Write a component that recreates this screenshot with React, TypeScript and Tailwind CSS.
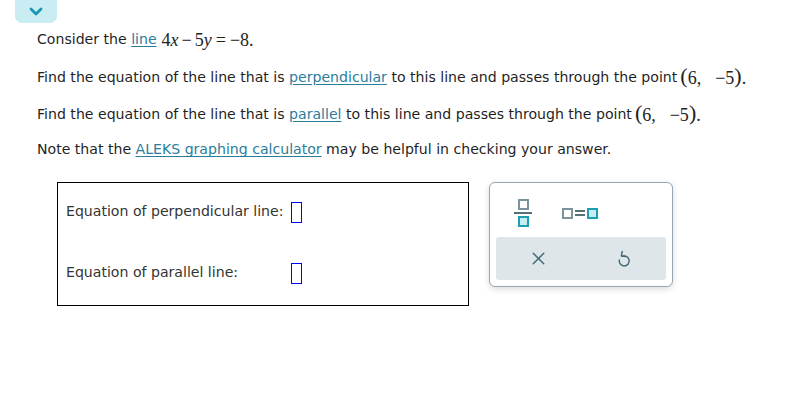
import { X } from 'lucide-react'

const link = 'text-[#2b7d9c] underline underline-offset-2'
const math = 'font-["Liberation_Serif",serif] text-[18px] text-[#222]'

function AnswerBox() {
  return <span className="inline-block w-[11px] h-[21px] border border-[#0000ff] align-middle" />
}

function Point() {
  return (
    <span className={`${math} flex items-center ml-[3px]`}>
      <span className="text-[22px] leading-none relative -top-[2px]">(</span>
      <span>6,</span>
      <span className="ml-[14px]">−5</span>
      <span className="text-[22px] leading-none relative -top-[2px]">)</span>
      <span>.</span>
    </span>
  )
}

function FractionIcon() {
  return (
    <div className="flex flex-col items-center w-[18px]">
      <div className="w-[11px] h-[11px] border-2 border-[#7b939c] bg-white" />
      <div className="w-[18px] h-[2px] bg-[#56707a] my-[2px]" />
      <div className="w-[11px] h-[11px] border-2 border-[#1a9fb3] bg-[#c8eef4]" />
    </div>
  )
}

function EqualsIcon() {
  return (
    <div className="flex items-center gap-[2px]">
      <div className="w-[11px] h-[11px] border-2 border-[#7b939c] bg-white" />
      <div className="flex flex-col gap-[2px] w-[10px]">
        <div className="h-[2px] bg-[#56707a]" />
        <div className="h-[2px] bg-[#56707a]" />
      </div>
      <div className="w-[11px] h-[11px] border-2 border-[#1a9fb3] bg-[#c8eef4]" />
    </div>
  )
}

function UndoIcon() {
  return (
    <svg width="13" height="18" viewBox="0 0 13 18" fill="none" stroke="#466b78" strokeWidth="1.5" strokeLinecap="round" strokeLinejoin="round">
      <path d="M4.6 6.2 A5 5 0 1 1 1.3 10" />
      <path d="M4.2 1.5 L3.4 6 L7.6 6.4" />
    </svg>
  )
}

export default function App() {
  return (
    <div className="w-[807px] h-[402px] bg-white font-['DejaVu_Sans',sans-serif] text-[14.1px] text-[#1f1f1f]">
      <div className="ml-[15px] w-[42px] h-[23px] bg-[#c9edf3] rounded-b-[7px] flex items-center justify-center">
        <svg width="14" height="9" viewBox="0 0 14 9" fill="none" stroke="#1797b3" strokeWidth="2.8" strokeLinecap="round" strokeLinejoin="round">
          <path d="M2 2 L7 7 L12 2" />
        </svg>
      </div>

      <div className="pl-[37px]">
        <p className="mt-[6px] h-[22px] flex items-center">
          <span>Consider the&nbsp;</span>
          <span className={link}>line</span>
          <span className={`${math} ml-[5px] flex items-center`}>
            <span>4<i>x</i></span>
            <span className="mx-[3px]">−</span>
            <span>5<i>y</i></span>
            <span className="mx-[4px]">=</span>
            <span>−8.</span>
          </span>
        </p>
        <p className="mt-[16px] h-[22px] flex items-center">
          <span>Find the equation of the line that is&nbsp;</span>
          <span className={link}>perpendicular</span>
          <span>&nbsp;to this line and passes through the point</span>
          <Point />
        </p>
        <p className="mt-[15px] h-[22px] flex items-center">
          <span>Find the equation of the line that is&nbsp;</span>
          <span className={link}>parallel</span>
          <span>&nbsp;to this line and passes through the point</span>
          <Point />
        </p>
        <p className="mt-[14px] h-[20px] flex items-center">
          <span>Note that the&nbsp;</span>
          <span className={link}>ALEKS graphing calculator</span>
          <span>&nbsp;may be helpful in checking your answer.</span>
        </p>
      </div>

      <div className="flex items-start mt-[22px] ml-[57px]">
        <div className="w-[412px] h-[124px] border border-black flex flex-col pl-[8px] text-[#333]">
          <div className="flex items-center mt-[18px] h-[22px]">
            <span className="w-[225px]">Equation of perpendicular line:</span>
            <AnswerBox />
          </div>
          <div className="flex items-center mt-[39px] h-[22px]">
            <span className="w-[225px]">Equation of parallel line:</span>
            <AnswerBox />
          </div>
        </div>

        <div className="ml-[20px] w-[184px] h-[105px] border border-[#93a8b1] rounded-[6px] shadow-[0_2px_6px_rgba(0,0,0,0.15)] flex flex-col p-[6px] bg-white">
          <div className="flex items-center h-[48px] pl-[18px]">
            <FractionIcon />
            <div className="ml-[30px]"><EqualsIcon /></div>
          </div>
          <div className="flex-1 bg-[#dfe6e9] rounded-[3px] flex items-center">
            <div className="w-[85px] flex justify-center">
              <X size={21} color="#466b78" strokeWidth={1.7} />
            </div>
            <div className="w-[85px] flex justify-center pl-[2px]">
              <UndoIcon />
            </div>
          </div>
        </div>
      </div>
    </div>
  )
}
